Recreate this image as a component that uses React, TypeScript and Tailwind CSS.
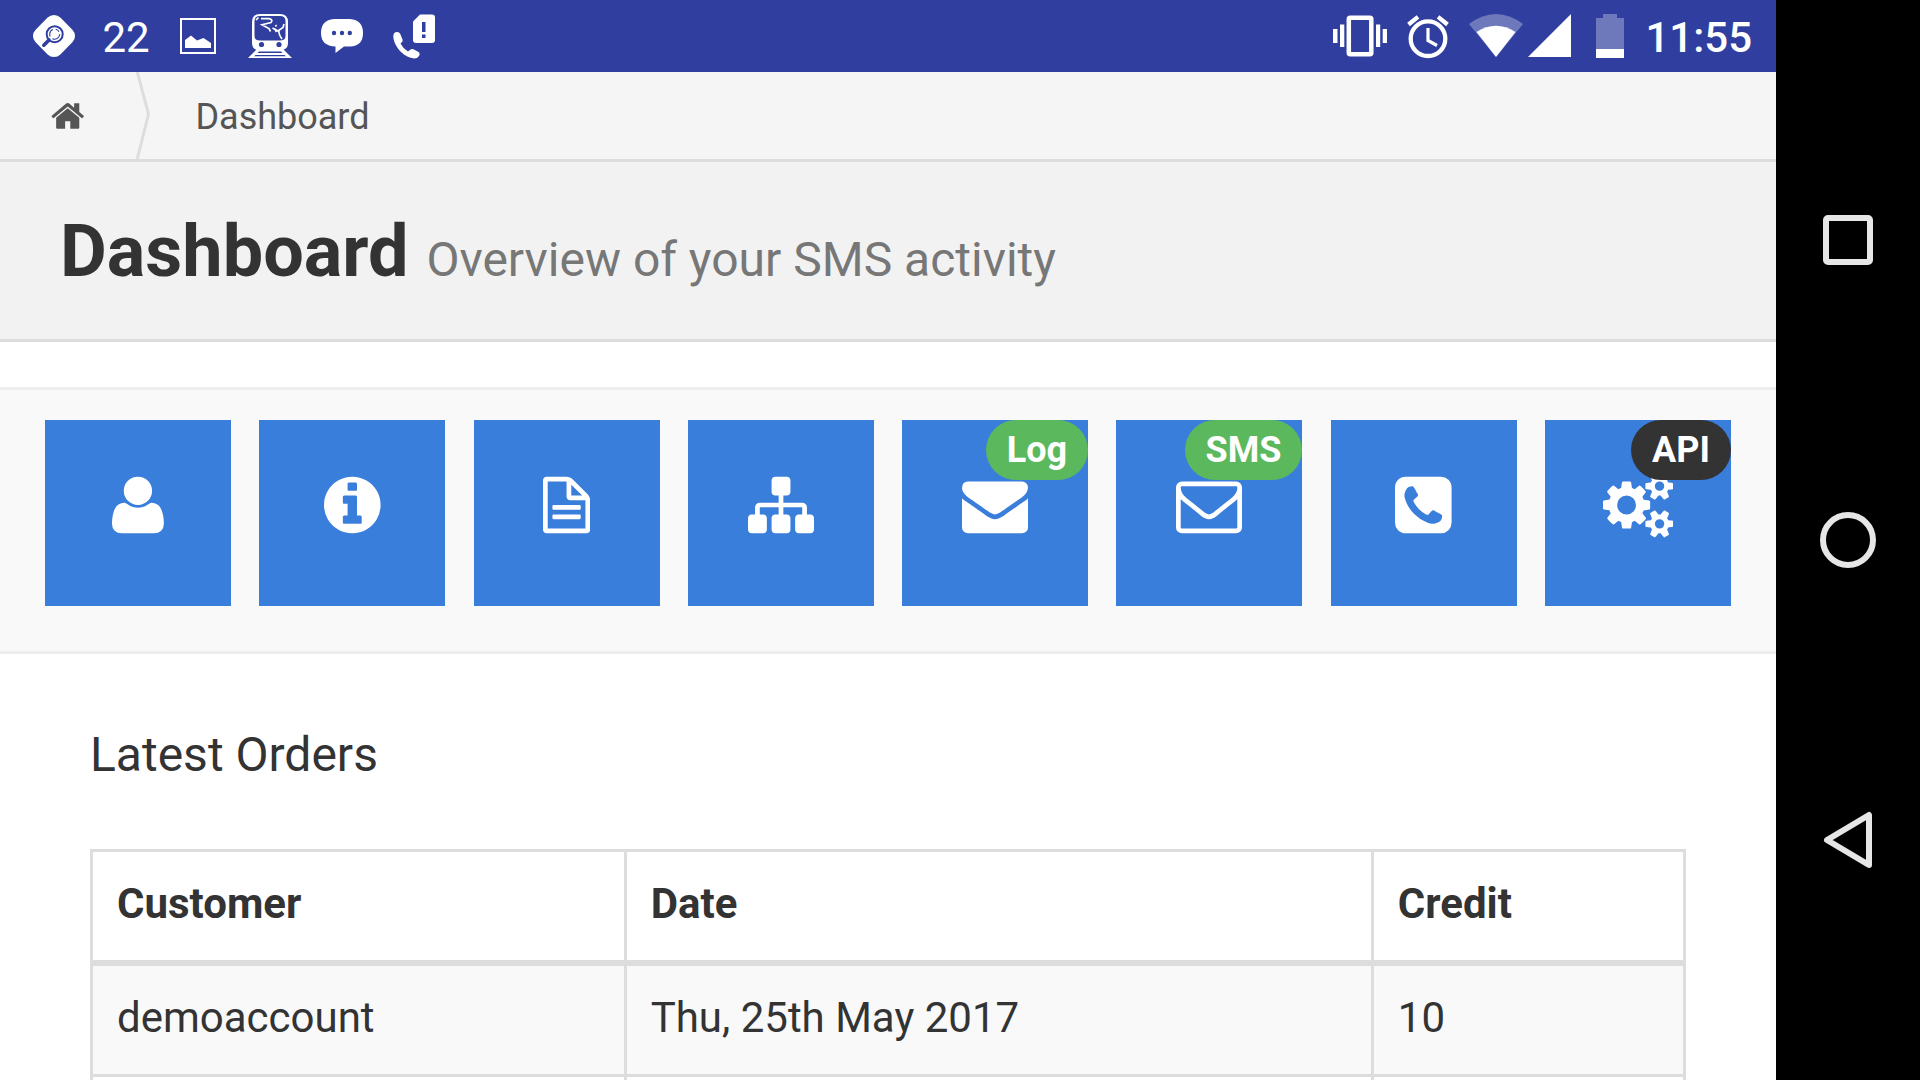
import type { ReactNode } from 'react';

// Glyph outlines use a y-up grid of 1792 units per em, baseline at 0
const glyphs = {
  home: {
    width: 1664,
    d: 'M1408 544v-480q0 -26 -19 -45t-45 -19h-384v384h-256v-384h-384q-26 0 -45 19t-19 45v480q0 1 0.5 3t0.5 3l575 474l575 -474q1 -2 1 -6zM1631 613l-62 -74q-8 -9 -21 -11h-3q-13 0 -21 7l-692 577l-692 -577q-12 -8 -24 -7q-13 2 -21 11l-62 74q-8 10 -7 23.5t11 21.5l719 599q32 26 76 26t76 -26l244 -204v195q0 14 9 23t23 9h192q14 0 23 -9t9 -23v-408l219 -182q10 -8 11 -21.5t-7 -23.5z',
  },
  user: {
    width: 1408,
    d: 'M1408 131q0 -120 -73 -189.5t-194 -69.5h-874q-121 0 -194 69.5t-73 189.5q0 53 3.5 103.5t14 109t26.5 108.5t43 97.5t62 81t85.5 53.5t111.5 20q9 0 42 -21.5t74.5 -48t108 -48t133.5 -21.5t133.5 21.5t108 48t74.5 48t42 21.5q61 0 111.5 -20t85.5 -53.5t62 -81t43 -97.5t26.5 -108.5t14 -109t3.5 -103.5zM1088 1024q0 -159 -112.5 -271.5t-271.5 -112.5t-271.5 112.5t-112.5 271.5t112.5 271.5t271.5 112.5t271.5 -112.5t112.5 -271.5z',
  },
  info: {
    width: 1536,
    d: 'M1024 160v160q0 14 -9 23t-23 9h-96v512q0 14 -9 23t-23 9h-320q-14 0 -23 -9t-9 -23v-160q0 -14 9 -23t23 -9h96v-320h-96q-14 0 -23 -9t-9 -23v-160q0 -14 9 -23t23 -9h448q14 0 23 9t9 23zM896 1056v160q0 14 -9 23t-23 9h-192q-14 0 -23 -9t-9 -23v-160q0 -14 9 -23t23 -9h192q14 0 23 9t9 23zM1536 640q0 -209 -103 -385.5t-279.5 -279.5t-385.5 -103t-385.5 103t-279.5 279.5t-103 385.5t103 385.5t279.5 279.5t385.5 103t385.5 -103t279.5 -279.5t103 -385.5z',
  },
  file: {
    width: 1280,
    d: 'M96 1408H640q40 0 88 -20t76 -48l408 -408q28 -28 48 -76t20 -88v-800q0 -40 -28 -68t-68 -28H96q-40 0 -68 28t-28 68v1344q0 40 28 68t68 28zM128 1280V0h1024v768h-416q-40 0 -68 28t-28 68v416zM768 1193V896h297zM288 640h704q14 0 23 -9t9 -23v-64q0 -14 -9 -23t-23 -9h-704q-14 0 -23 9t-9 23v64q0 14 9 23t23 9zM288 384h704q14 0 23 -9t9 -23v-64q0 -14 -9 -23t-23 -9h-704q-14 0 -23 9t-9 23v64q0 14 9 23t23 9z',
  },
  sitemap: {
    width: 1792,
    d: 'M1792 288v-320q0 -40 -28 -68t-68 -28h-320q-40 0 -68 28t-28 68v320q0 40 28 68t68 28h96v192h-512v-192h96q40 0 68 -28t28 -68v-320q0 -40 -28 -68t-68 -28h-320q-40 0 -68 28t-28 68v320q0 40 28 68t68 28h96v192h-512v-192h96q40 0 68 -28t28 -68v-320q0 -40 -28 -68t-68 -28h-320q-40 0 -68 28t-28 68v320q0 40 28 68t68 28h96v192q0 52 38 90t90 38h512v192h-96q-40 0 -68 28t-28 68v320q0 40 28 68t68 28h320q40 0 68 -28t28 -68v-320q0 -40 -28 -68t-68 -28h-96v-192h512q52 0 90 -38t38 -90v-192h96q40 0 68 -28t28 -68z',
  },
  envelope: {
    width: 1792,
    d: 'M1792 826v-794q0 -66 -47 -113t-113 -47h-1472q-66 0 -113 47t-47 113v794q44 -49 101 -87q362 -246 497 -345q57 -42 92.5 -65.5t94.5 -48t110 -24.5h1h1q51 0 110 24.5t94.5 48t92.5 65.5q170 123 498 345q57 39 100 87zM1792 1120q0 -79 -49 -151t-122 -123q-376 -261 -468 -325q-10 -7 -42.5 -30.5t-54 -38t-52 -32.5t-57.5 -27t-50 -9h-1h-1q-23 0 -50 9t-57.5 27t-52 32.5t-54 38t-42.5 30.5q-91 64 -262 182.5t-205 142.5q-62 42 -117 115.5t-55 136.5q0 78 41.5 130t118.5 52h1472q65 0 112.5 -47t47.5 -113z',
  },
  envelopeOutline: {
    width: 1792,
    d: 'M1664 32v768q-32 -36 -69 -66q-268 -206 -426 -338q-51 -43 -83 -67t-86.5 -48.5t-102.5 -24.5h-1h-1q-48 0 -102.5 24.5t-86.5 48.5t-83 67q-158 132 -426 338q-37 30 -69 66v-768q0 -13 9.5 -22.5t22.5 -9.5h1472q13 0 22.5 9.5t9.5 22.5zM1664 1083v11v13.5t-0.5 13t-3 12.5t-5.5 9t-9 7.5t-14 2.5h-1472q-13 0 -22.5 -9.5t-9.5 -22.5q0 -168 147 -284q193 -152 401 -317q6 -5 35 -29.5t46 -37.5t44.5 -31.5t50.5 -27.5t43 -9h1h1q20 0 43 9t50.5 27.5t44.5 31.5t46 37.5t35 29.5q208 165 401 317q54 43 100.5 115.5t46.5 131.5zM1792 1120v-1088q0 -66 -47 -113t-113 -47h-1472q-66 0 -113 47t-47 113v1088q0 66 47 113t113 47h1472q66 0 113 -47t47 -113z',
  },
  phone: {
    width: 1536,
    d: 'M1280 343q0 11 -2 16t-18 16.5t-40.5 25t-47.5 26.5t-45.5 25t-28.5 15q-5 3 -19 13t-25 15t-21 5q-15 0 -36.5 -20.5t-39.5 -45t-38.5 -45t-33.5 -20.5q-7 0 -16.5 3.5t-15.5 6.5t-17 9.5t-14 8.5q-99 55 -170 126.5t-127 170.5q-2 3 -8.5 14t-9.5 17t-6.5 15.5t-3.5 16.5q0 13 20.5 33.5t45 38.5t45 39.5t20.5 36.5q0 10 -5 21t-15 25t-13 19q-3 6 -15 28.5t-25 45.5t-26.5 47.5t-25 40.5t-16.5 18t-16 2q-48 0 -101 -22q-46 -21 -80 -94.5t-34 -130.5q0 -16 2.5 -34t5 -30.5t9 -33t10 -29.5t12.5 -33t11 -30q60 -164 216.5 -320.5t320.5 -216.5q6 -2 30 -11t33 -12.5t29.5 -10t33 -9t30.5 -5t34 -2.5q57 0 130.5 34t94.5 80q22 53 22 101zM1536 1120v-960q0 -119 -84.5 -203.5t-203.5 -84.5h-960q-119 0 -203.5 84.5t-84.5 203.5v960q0 119 84.5 203.5t203.5 84.5h960q119 0 203.5 -84.5t84.5 -203.5z',
  },
  cogs: {
    width: 1920,
    d: 'M896 640q0 106 -75 181t-181 75t-181 -75t-75 -181t75 -181t181 -75t181 75t75 181zM1664 128q0 52 -38 90t-90 38t-90 -38t-38 -90q0 -53 37.5 -90.5t90.5 -37.5t90.5 37.5t37.5 90.5zM1664 1152q0 52 -38 90t-90 38t-90 -38t-38 -90q0 -53 37.5 -90.5t90.5 -37.5t90.5 37.5t37.5 90.5zM1280 731v-185q0 -10 -7 -19.5t-16 -10.5l-155 -24q-11 -35 -32 -76q34 -48 90 -115q7 -11 7 -20q0 -12 -7 -19q-23 -30 -82.5 -89.5t-78.5 -59.5q-11 0 -21 7l-115 90q-37 -19 -77 -31q-11 -108 -23 -155q-7 -24 -30 -24h-186q-11 0 -20 7.5t-10 17.5l-23 153q-34 10 -75 31l-118 -89q-7 -7 -20 -7q-11 0 -21 8q-144 133 -144 160q0 9 7 19q10 14 41 53t47 61q-23 44 -35 82l-152 24q-10 1 -17 9.5t-7 19.5v185q0 10 7 19.5t16 10.5l155 24q11 35 32 76q-34 48 -90 115q-7 11 -7 20q0 12 7 20q22 30 82 89t79 59q11 0 21 -7l115 -90q34 18 77 32q11 108 23 154q7 24 30 24h186q11 0 20 -7.5t10 -17.5l23 -153q34 -10 75 -31l118 89q8 7 20 7q11 0 21 -8q144 -133 144 -160q0 -8 -7 -19q-12 -16 -42 -54t-45 -60q23 -48 34 -82l152 -23q10 -2 17 -10.5t7 -19.5zM1920 198v-140q0 -16 -149 -31q-12 -27 -30 -52q51 -113 51 -138q0 -4 -4 -7q-122 -71 -124 -71q-8 0 -46 47t-52 68q-20 -2 -30 -2t-30 2q-14 -21 -52 -68t-46 -47q-2 0 -124 71q-4 3 -4 7q0 25 51 138q-18 25 -30 52q-149 15 -149 31v140q0 16 149 31q13 29 30 52q-51 113 -51 138q0 4 4 7q4 2 35 20t59 34t30 16q8 0 46 -46.5t52 -67.5q20 2 30 2t30 -2q51 71 92 112l6 2q4 0 124 -70q4 -3 4 -7q0 -25 -51 -138q17 -23 30 -52q149 -15 149 -31zM1920 1222v-140q0 -16 -149 -31q-12 -27 -30 -52q51 -113 51 -138q0 -4 -4 -7q-122 -71 -124 -71q-8 0 -46 47t-52 68q-20 -2 -30 -2t-30 2q-14 -21 -52 -68t-46 -47q-2 0 -124 71q-4 3 -4 7q0 25 51 138q-18 25 -30 52q-149 15 -149 31v140q0 16 149 31q13 29 30 52q-51 113 -51 138q0 4 4 7q4 2 35 20t59 34t30 16q8 0 46 -46.5t52 -67.5q20 2 30 2t30 -2q51 71 92 112l6 2q4 0 124 -70q4 -3 4 -7q0 -25 -51 -138q17 -23 30 -52q149 -15 149 -31z',
  },
};

type GlyphName = keyof typeof glyphs;

type Shortcut = { id: string; icon: GlyphName; label: string; badge?: string; badgeColor?: string };

const shortcuts: Shortcut[] = [
  { id: 'profile', icon: 'user', label: 'Profile' },
  { id: 'info', icon: 'info', label: 'Information' },
  { id: 'orders', icon: 'file', label: 'Orders' },
  { id: 'groups', icon: 'sitemap', label: 'Groups' },
  { id: 'log', icon: 'envelope', label: 'Message log', badge: 'Log', badgeColor: 'bg-[#5cb85c]' },
  { id: 'sms', icon: 'envelopeOutline', label: 'Send message', badge: 'SMS', badgeColor: 'bg-[#5cb85c]' },
  { id: 'contacts', icon: 'phone', label: 'Contacts' },
  { id: 'api', icon: 'cogs', label: 'Settings', badge: 'API', badgeColor: 'bg-[#333333]' },
];

const orders = [
  { customer: 'demoaccount', date: 'Thu, 25th May 2017', credit: '10' },
  { customer: '', date: '', credit: '' },
];

function Glyph({ name, className }: { name: GlyphName; className: string }) {
  const { width, d } = glyphs[name];
  return (
    <svg viewBox={`0 -1536 ${width} 1792`} className={className} fill="currentColor" aria-hidden="true">
      <path transform="scale(1 -1)" d={d} />
    </svg>
  );
}

function Notice({ children }: { children: ReactNode }) {
  return (
    <svg viewBox="0 0 72 72" className="size-[72px]" fill="#fff" aria-hidden="true">
      {children}
    </svg>
  );
}

function StatusBar() {
  return (
    <div className="flex h-[72px] items-center justify-between bg-[#303f9f] pr-6 pl-[18px] text-white">
      <div className="flex items-center">
        <Notice>
          <rect x="18.500" y="18.500" width="35" height="35" rx="9" transform="rotate(45 36 36)" />
          <g fill="none" stroke="#303f9f">
            <circle cx="36.700" cy="34.200" r="8" strokeWidth="2" />
            <circle cx="36.700" cy="34.200" r="5" strokeWidth="1.100" strokeDasharray="10 3 8 3 4 3.400" />
            <path d="M31 40L25.800 45.200" strokeWidth="3.600" strokeLinecap="round" />
          </g>
        </Notice>
        <span className="w-[72px] pt-1 text-center text-[42px] leading-[48px]">22</span>
        <Notice>
          <path d="M18 18H54V54H18ZM20 20V52H52V20Z" fillRule="evenodd" />
          <path d="M23 48V40L29 35.500L35 40.500L41.500 38L49 43V48Z" />
        </Notice>
        <Notice>
          <path
            fillRule="evenodd"
            d="M26 14H46Q54 14 54 22V43Q54 50 47 50H25Q18 50 18 43V22Q18 14 26 14ZM26 16Q20.500 16 20.500 21V36Q20.500 40.500 26 40.500H46Q51.500 40.500 51.500 36V21Q51.500 16 46 16Z"
          />
          <path
            d="M27 18.700H35Q39.500 19.500 37 22.500L28 24.700L35 28.500L36.500 31.500M38.500 28L44 31L49 27.500L50 24M45 31Q44.500 34 48 39M41.500 25L42.500 26.500M24.500 17.500L22 20M40.500 28.500L42.500 32"
            fill="none"
            stroke="#fff"
            strokeWidth="1.700"
          />
          <circle cx="27.500" cy="44.500" r="2.600" fill="#303f9f" />
          <circle cx="45" cy="44.500" r="2.600" fill="#303f9f" />
          <path d="M23 49H49L58 58H14Z" />
          <path d="M25 51.500H47L48.500 53H23.500ZM21.500 55H50.500L52 56.300H20Z" fill="#303f9f" />
        </Notice>
        <Notice>
          <path d="M28 19H44Q57 20 57 33Q57 46 44 46.500H38L29.500 53V46.500Q15 46 15 33Q15 20 28 19Z" />
          <g fill="#303f9f">
            <circle cx="28" cy="33" r="2.200" />
            <circle cx="36" cy="33" r="2.200" />
            <circle cx="43.800" cy="33" r="2.200" />
          </g>
        </Notice>
        <Notice>
          <path d="M42 14.500H54Q57 14.500 57 17.500V40Q57 43 54 43H38Q35 43 35 40V21.500Z" />
          <path d="M44 22H47.500V32H44ZM44 34.500H47.500V38H44Z" fill="#303f9f" />
          <path d="M15.300 36Q15.500 32 19 32Q21.500 32 22.300 34L24.700 40Q25 41.500 22.500 43.500Q25 48.500 30 51.500L32.500 49.500Q34 48.500 36 49.500L40.500 52Q42.500 53.500 41 56Q39.500 58.500 36 58.500C25 57 15.500 46 15.300 36Z" />
        </Notice>
      </div>

      <div className="flex items-center gap-5">
        <svg viewBox="0 0 54 72" className="h-[72px] w-[54px]" fill="#fff" aria-hidden="true">
          <rect x="15.800" y="17.800" width="22.500" height="36.500" rx="1.500" fill="none" stroke="#fff" strokeWidth="4.500" />
          <path d="M0 29H4.500V43H0ZM7 24.500H11.300V47H7ZM43 24.500H47.200V47H43ZM49.700 29H54V43H49.700Z" />
        </svg>
        <svg viewBox="0 0 42 72" className="h-[72px] w-[42px]" fill="none" stroke="#fff" aria-hidden="true">
          <circle cx="21" cy="38.700" r="17.300" strokeWidth="4.300" />
          <path d="M1.500 24.500L11 16.800M31 16.800L40.500 24.500" strokeWidth="4.200" />
          <path d="M21 28V40.500L30 45.500" strokeWidth="3.200" />
        </svg>
        <div className="flex gap-[5px]">
          <svg viewBox="0 0 54 72" className="h-[72px] w-[54px]" fill="#fff" aria-hidden="true">
            <path d="M27 57L0 24Q27 4 54 24Z" fillOpacity="0.300" />
            <path d="M27 57L7.500 32Q27 19.500 46.500 32Z" />
          </svg>
          <svg viewBox="0 0 43 72" className="h-[72px] w-[43px]" fill="#fff" aria-hidden="true">
            <path d="M0 57L43 14V57Z" />
          </svg>
        </div>
        <svg viewBox="0 0 34 72" className="h-[72px] w-[34px]" fill="#fff" aria-hidden="true">
          <path d="M5 18H12V14H26V18H33V49H5Z" fillOpacity="0.300" />
          <path d="M5 49H33V58H5Z" />
        </svg>
        <time className="pt-1 text-[42px] leading-[48px] font-medium">11:55</time>
      </div>
    </div>
  );
}

function NavBar() {
  const button = 'flex flex-1 items-center justify-center';
  return (
    <nav className="flex w-36 shrink-0 flex-col bg-black py-[90px]">
      <button className={button} aria-label="Recent apps">
        <svg viewBox="0 0 72 72" className="size-[72px]" fill="none" stroke="#e6e6e6" strokeWidth="6">
          <rect x="14" y="14" width="44" height="44" rx="2" />
        </svg>
      </button>
      <button className={button} aria-label="Home">
        <svg viewBox="0 0 72 72" className="size-[72px]" fill="none" stroke="#e6e6e6" strokeWidth="6">
          <circle cx="36" cy="36" r="25" />
        </svg>
      </button>
      <button className={button} aria-label="Back">
        <svg viewBox="0 0 72 72" className="size-[72px]" fill="none" stroke="#e6e6e6" strokeWidth="6" strokeLinejoin="round">
          <path d="M15 36L57 11V61Z" />
        </svg>
      </button>
    </nav>
  );
}

export default function App() {
  return (
    <div className="flex h-screen overflow-hidden bg-white font-[Roboto,sans-serif] text-[#333333]">
      <div className="min-w-0 flex-1 overflow-hidden">
        <StatusBar />

        <nav className="flex h-[90px] items-center border-b-[3px] border-[#dddddd] bg-[#f5f5f5] text-[#555555]">
          <a href="#home" aria-label="Home" className="px-[51px]">
            <Glyph name="home" className="h-9" />
          </a>
          <svg viewBox="0 0 16 87" className="h-full w-4" fill="none" stroke="#dddddd" strokeWidth="3" aria-hidden="true">
            <path d="M2 -1L13.500 42L2 88" />
          </svg>
          <span className="pt-0.5 pl-11 text-4xl">Dashboard</span>
        </nav>

        <header className="border-b-[3px] border-[#dddddd] bg-[#f2f2f2] px-[60px] py-12">
          <h1 className="pt-0.5 text-[72px] leading-[79px] font-bold">
            Dashboard <small className="text-5xl font-normal text-[#777777]">Overview of your SMS activity</small>
          </h1>
        </header>

        <section className="mt-[45px] flex justify-between border-y-[3px] border-[#eeeeee] bg-[#f9f9f9] px-[45px] pt-[30px] pb-[45px]">
          {shortcuts.map((s) => (
            <a
              key={s.id}
              href={`#${s.id}`}
              aria-label={s.label}
              className="relative flex size-[186px] justify-center bg-[#3a7edc] pt-[52px] text-white"
            >
              <Glyph name={s.icon} className="h-[66px]" />
              {s.badge && (
                <span className={`absolute top-0 right-0 rounded-full px-[21px] text-4xl leading-[60px] font-bold ${s.badgeColor}`}>
                  {s.badge}
                </span>
              )}
            </a>
          ))}
        </section>

        <main className="px-[90px] pt-[74px]">
          <h2 className="text-5xl leading-[54px]">Latest Orders</h2>
          <table className="mt-[67px] w-full table-fixed border-collapse text-left text-[42px] leading-[60px]">
            <thead>
              <tr>
                <th className="w-[33.5%] border-[3px] border-b-[6px] border-[#dddddd] px-6 pt-[22px] pb-[26px]">Customer</th>
                <th className="border-[3px] border-b-[6px] border-[#dddddd] px-6 pt-[22px] pb-[26px]">Date</th>
                <th className="w-[19.6%] border-[3px] border-b-[6px] border-[#dddddd] px-6 pt-[22px] pb-[26px]">Credit</th>
              </tr>
            </thead>
            <tbody>
              {orders.map((order, i) => (
                <tr key={i} className="h-[111px] odd:bg-[#f9f9f9]">
                  <td className="border-[3px] border-[#dddddd] px-6 pt-[22px] pb-[26px]">{order.customer}</td>
                  <td className="border-[3px] border-[#dddddd] px-6 pt-[22px] pb-[26px]">{order.date}</td>
                  <td className="border-[3px] border-[#dddddd] px-6 pt-[22px] pb-[26px]">{order.credit}</td>
                </tr>
              ))}
            </tbody>
          </table>
        </main>
      </div>
      <NavBar />
    </div>
  );
}
